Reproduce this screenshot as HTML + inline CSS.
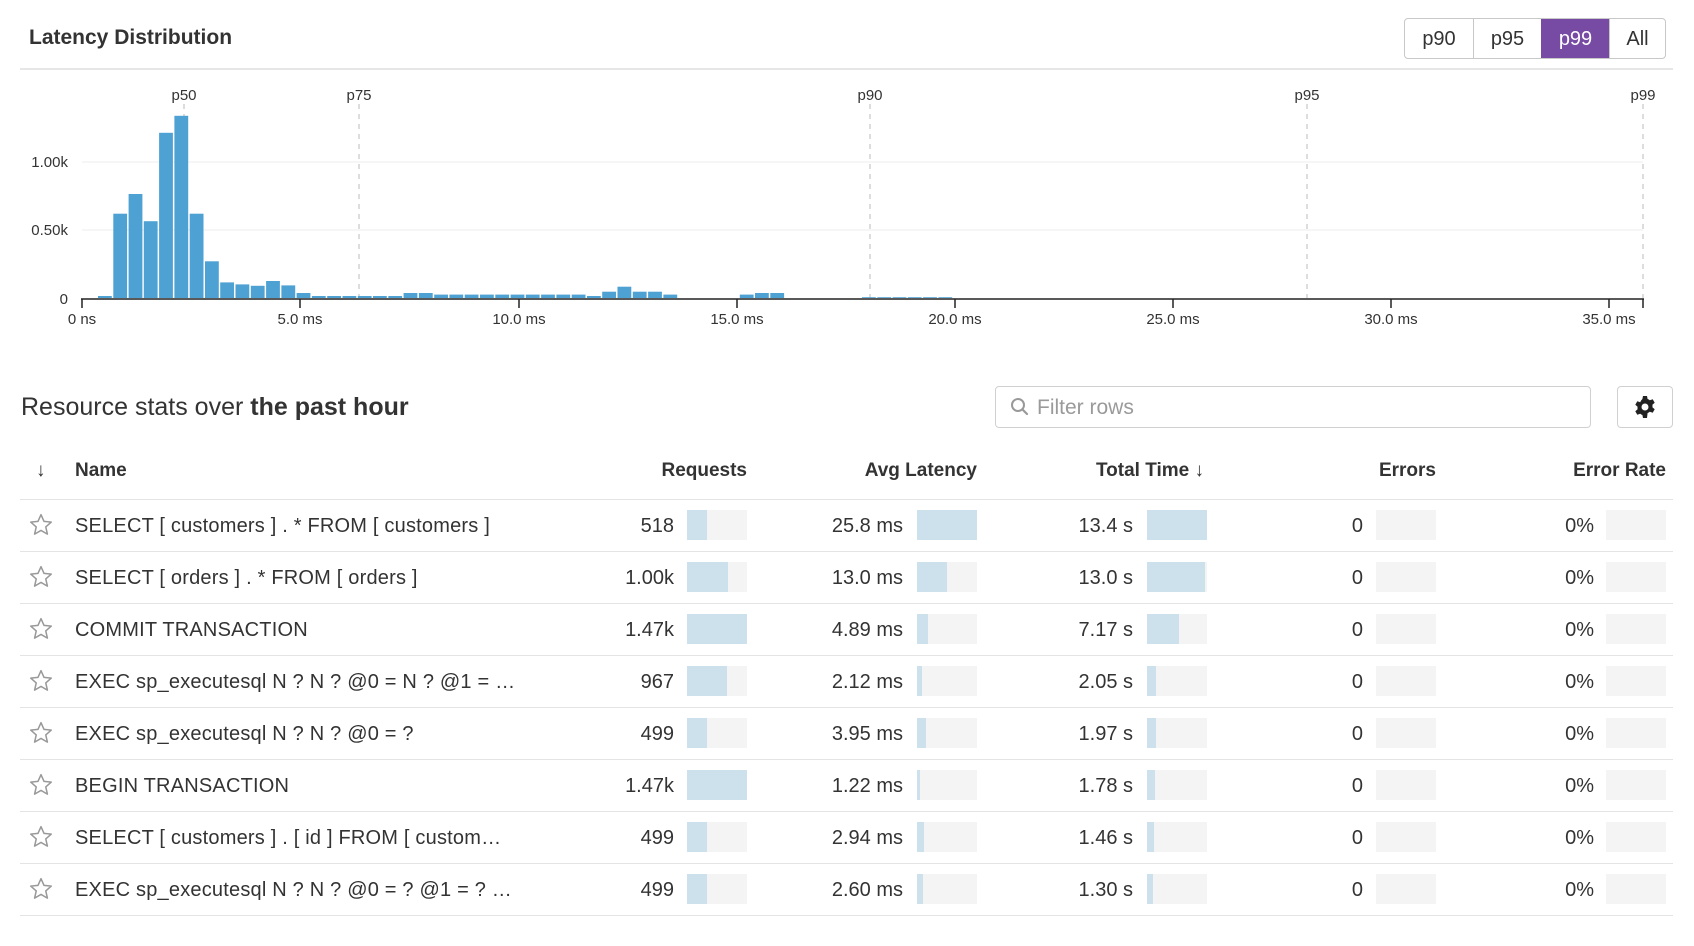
<!DOCTYPE html>
<html><head><meta charset="utf-8"><style>
*{margin:0;padding:0;box-sizing:border-box}
body{width:1694px;height:946px;background:#fff;font-family:"Liberation Sans",sans-serif;color:#333;position:relative;overflow:hidden}
.a{position:absolute;white-space:nowrap}
.btns{position:absolute;left:1404px;top:18px;height:41px;display:flex;border:1px solid #c8c8c8;border-radius:4px;overflow:hidden}
.btns div{height:39px;line-height:41px;text-align:center;font-size:20px;border-left:1px solid #c8c8c8;color:#333}
.btns div:first-child{border-left:none}
.th{position:absolute;top:460px;font-size:19px;font-weight:bold;white-space:nowrap}
.r{position:absolute;font-size:20px;white-space:nowrap;text-align:right}
.bar{position:absolute;width:60px;height:30px;background:#f4f4f4}
.bar i{display:block;height:30px;background:#cde1ed}
.line{position:absolute;left:20px;width:1653px;height:1px;background:#e4e4e4}
</style></head><body>
<div class="a" style="left:29px;top:26px;font-size:21px;font-weight:bold">Latency Distribution</div>
<div class="btns"><div style="width:68px">p90</div><div style="width:68px">p95</div><div style="width:68px;background:#774aa4;color:#fff;border-left-color:#774aa4">p99</div><div style="width:56px">All</div></div>
<div class="line" style="top:68px;height:2px;background:#e6e6e6"></div>
<svg class="a" style="left:0;top:0" width="1694" height="340" font-family="Liberation Sans, sans-serif" font-size="14" fill="#333">
<line x1="82" y1="162" x2="1643" y2="162" stroke="#ececec"/>
<line x1="82" y1="230" x2="1643" y2="230" stroke="#ececec"/>
<g text-anchor="end" font-size="15"><text x="68" y="167">1.00k</text><text x="68" y="235">0.50k</text><text x="68" y="304">0</text></g>
<g stroke="#bbb" stroke-dasharray="5,5"><line x1="184" y1="104" x2="184" y2="298"/><line x1="359" y1="104" x2="359" y2="298"/><line x1="870" y1="104" x2="870" y2="298"/><line x1="1307" y1="104" x2="1307" y2="298"/><line x1="1643" y1="104" x2="1643" y2="298"/></g>
<g text-anchor="middle" font-size="15"><text x="184" y="100">p50</text><text x="359" y="100">p75</text><text x="870" y="100">p90</text><text x="1307" y="100">p95</text><text x="1643" y="100">p99</text></g>
<g id="bars" fill="#4ea1d3"></g>
<line x1="81" y1="299" x2="1644" y2="299" stroke="#222" stroke-width="1.5"/>
<g stroke="#222" stroke-width="1.5"><line x1="82" y1="299" x2="82" y2="308"/><line x1="300" y1="299" x2="300" y2="308"/><line x1="519" y1="299" x2="519" y2="308"/><line x1="737" y1="299" x2="737" y2="308"/><line x1="955" y1="299" x2="955" y2="308"/><line x1="1173" y1="299" x2="1173" y2="308"/><line x1="1391" y1="299" x2="1391" y2="308"/><line x1="1609" y1="299" x2="1609" y2="308"/><line x1="1643" y1="299" x2="1643" y2="308"/></g>
<g text-anchor="middle" font-size="15"><text x="82" y="324">0 ns</text><text x="300" y="324">5.0 ms</text><text x="519" y="324">10.0 ms</text><text x="737" y="324">15.0 ms</text><text x="955" y="324">20.0 ms</text><text x="1173" y="324">25.0 ms</text><text x="1391" y="324">30.0 ms</text><text x="1609" y="324">35.0 ms</text></g>
</svg>
<script>
var h=[.015,.62,.765,.565,1.215,1.34,.62,.27,.115,.10,.09,.125,.093,.037,.015,.015,.015,.015,.015,.015,.037,.037,.025,.025,.025,.025,.025,.025,.025,.025,.025,.025,.015,.046,.083,.046,.046,.025,0,0,0,0,.025,.037,.037,0,0,0,0,0,.006,.006,.006,.006,.006,.006];
var g=document.getElementById('bars'),s='';
for(var i=0;i<h.length;i++){if(!h[i])continue;var y=298-h[i]*136;s+='<rect x="'+(98+i*15.28).toFixed(1)+'" y="'+y.toFixed(1)+'" width="13.8" height="'+(h[i]*136).toFixed(1)+'"/>';}
g.innerHTML=s;
</script>
<div class="a" style="left:21px;top:393px;font-size:25px">Resource stats over <b>the past hour</b></div>
<div class="a" style="left:995px;top:386px;width:596px;height:42px;border:1px solid #d0d0d0;border-radius:4px"></div>
<svg class="a" style="left:1010px;top:397px" width="20" height="20"><circle cx="8" cy="8" r="6" fill="none" stroke="#999" stroke-width="2"/><line x1="12.5" y1="12.5" x2="17" y2="17" stroke="#999" stroke-width="2.2" stroke-linecap="round"/></svg>
<div class="a" style="left:1037px;top:396px;font-size:21px;color:#9a9a9a">Filter rows</div>
<div class="a" style="left:1617px;top:386px;width:56px;height:42px;border:1px solid #d0d0d0;border-radius:4px"></div>
<svg class="a" style="left:1633px;top:395px" width="24" height="24" viewBox="0 0 24 24"><path fill="#222" d="M10 1h4l.6 3a8 8 0 0 1 2.2 1.3l2.9-1 2 3.4-2.3 2a8 8 0 0 1 0 2.6l2.3 2-2 3.4-2.9-1a8 8 0 0 1-2.2 1.3L14 23h-4l-.6-3a8 8 0 0 1-2.2-1.3l-2.9 1-2-3.4 2.3-2a8 8 0 0 1 0-2.6l-2.3-2 2-3.4 2.9 1A8 8 0 0 1 9.4 4zM12 8.5a3.5 3.5 0 1 0 0 7 3.5 3.5 0 0 0 0-7z"/></svg>
<div class="th" style="left:36px;font-weight:normal">↓</div>
<div class="th" style="left:75px">Name</div>
<div class="th" style="right:947px">Requests</div>
<div class="th" style="right:717px">Avg Latency</div>
<div class="th" style="right:490px">Total Time ↓</div>
<div class="th" style="right:258px">Errors</div>
<div class="th" style="right:28px">Error Rate</div>
<div class="line" style="top:499px"></div>
<div id="rows"></div>
<script>
var R=[["SELECT [ customers ] . * FROM [ customers ]","518",.34,"25.8 ms",1,"13.4 s",1],
["SELECT [ orders ] . * FROM [ orders ]","1.00k",.68,"13.0 ms",.5,"13.0 s",.97],
["COMMIT TRANSACTION","1.47k",1,"4.89 ms",.19,"7.17 s",.535],
["EXEC sp_executesql N ? N ? @0 = N ? @1 = …","967",.66,"2.12 ms",.08,"2.05 s",.15],
["EXEC sp_executesql N ? N ? @0 = ?","499",.34,"3.95 ms",.15,"1.97 s",.147],
["BEGIN TRANSACTION","1.47k",1,"1.22 ms",.05,"1.78 s",.133],
["SELECT [ customers ] . [ id ] FROM [ custom…","499",.34,"2.94 ms",.11,"1.46 s",.109],
["EXEC sp_executesql N ? N ? @0 = ? @1 = ? …","499",.34,"2.60 ms",.10,"1.30 s",.097]];
var o='';
function bar(x,t,f){return '<div class="bar" style="left:'+x+'px;top:'+t+'px"><i style="width:'+(f*60)+'px"></i></div>';}
for(var i=0;i<R.length;i++){var c=525+52*i,t=c-10,r=R[i];
o+='<svg class="a" style="left:28px;top:'+(c-13)+'px" width="26" height="26" viewBox="0 0 24 24"><path d="M12 2.5l2.8 6.2 6.7.6-5.1 4.5 1.5 6.6L12 17l-5.9 3.4 1.5-6.6-5.1-4.5 6.7-.6z" fill="none" stroke="#999" stroke-width="1.4" stroke-linejoin="round"/></svg>';
o+='<div class="a" style="left:75px;top:'+t+'px;font-size:20px;letter-spacing:0.2px">'+r[0]+'</div>';
o+='<div class="r" style="right:1020px;top:'+t+'px">'+r[1]+'</div>'+bar(687,c-15,r[2]);
o+='<div class="r" style="right:791px;top:'+t+'px">'+r[3]+'</div>'+bar(917,c-15,r[4]);
o+='<div class="r" style="right:561px;top:'+t+'px">'+r[5]+'</div>'+bar(1147,c-15,r[6]);
o+='<div class="r" style="right:331px;top:'+t+'px">0</div>'+bar(1376,c-15,0);
o+='<div class="r" style="right:100px;top:'+t+'px">0%</div>'+bar(1606,c-15,0);
o+='<div class="line" style="top:'+(551+52*i)+'px"></div>';}
document.getElementById('rows').innerHTML=o;
</script>
</body></html>
